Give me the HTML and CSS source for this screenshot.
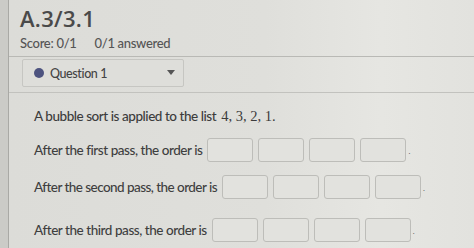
FILE: index.html
```html
<!DOCTYPE html>
<html>
<head>
<meta charset="utf-8">
<link rel="stylesheet" href="styles.css">
</head>
<body>
<div class="page">
  <div class="side"></div>
  <div class="main">
    <div class="header">
      <h1 class="title">A.3/3.1</h1>
      <div class="score"><span>Score: 0/1</span><span class="answered">0/1 answered</span></div>
    </div>
    <div class="qbar">
      <div class="qselect">
        <span class="dot"></span>
        <span class="qlabel">Question 1</span>
        <svg class="caret" width="8" height="6" viewBox="0 0 8 6"><path d="M0 0 L8 0 L4 5 Z" fill="#555"/></svg>
      </div>
    </div>
    <div class="question">
      <p class="prompt">A bubble sort is applied to the list <span class="math">4, 3, 2, 1.</span></p>
      <div class="row r1">
        <span class="label">After the first pass, the order is</span>
        <span class="boxes"><span class="box"></span><span class="box"></span><span class="box"></span><span class="box"></span></span><span class="dotend">.</span>
      </div>
      <div class="row r2">
        <span class="label">After the second pass, the order is</span>
        <span class="boxes"><span class="box"></span><span class="box"></span><span class="box"></span><span class="box"></span></span><span class="dotend">.</span>
      </div>
      <div class="row r3">
        <span class="label">After the third pass, the order is</span>
        <span class="boxes"><span class="box"></span><span class="box"></span><span class="box"></span><span class="box"></span></span><span class="dotend">.</span>
      </div>
    </div>
  </div>
</div>
</body>
</html>
```
FILE: styles.css
```css
html, body {
  margin: 0;
  padding: 0;
  width: 474px;
  height: 248px;
  overflow: hidden;
}
body {
  font-family: Lato, "Open Sans", sans-serif;
  color: #404040;
  background: #d9d9d5;
}
.page {
  display: flex;
  height: 248px;
}
.side {
  width: 8px;
  flex: none;
  background: #cbcbc7;
  border-right: 1px solid #a9a9a5;
}
.main {
  flex: 1;
  background: linear-gradient(90deg, #dcdcd8 0%, #dfdfdb 55%, #e6e6e2 80%, #e2e2de 100%);
}
.header {
  padding: 5px 0 0 11px;
  height: 51px;
  border-bottom: 1px solid #b9b9b5;
}
.title {
  margin: 0;
  font-size: 22px;
  line-height: 26px;
  font-weight: 600;
  color: #4a4a4a;
  letter-spacing: 0.3px;
  font-family: "Open Sans", sans-serif;
}
.score {
  font-size: 13px;
  letter-spacing: -0.3px;
  line-height: 18px;
  margin-top: 3px;
  color: #555;
  font-weight: 500;
}
.answered {
  margin-left: 18px;
}
.qbar {
  height: 36px;
  padding: 2px 0 0 13px;
  box-sizing: border-box;
  border-bottom: 1px solid #c2c2be;
}
.qselect {
  width: 162px;
  height: 28px;
  box-sizing: border-box;
  border: 1px solid #c6c6c2;
  border-radius: 2px;
  background: #dededa;
  display: flex;
  align-items: center;
  padding-left: 11px;
}
.dot {
  width: 10px;
  height: 10px;
  border-radius: 50%;
  background: #4d537f;
  flex: none;
}
.qlabel {
  font-size: 12.5px;
  letter-spacing: -0.4px;
  margin-left: 6px;
  color: #444;
  font-weight: 500;
}
.caret {
  margin-left: auto;
  margin-right: 8px;
}
.question {
  padding: 13px 0 0 25px;
}
.prompt {
  margin: 0;
  font-size: 13.5px;
  letter-spacing: -0.45px;
  line-height: 20px;
  color: #3c3c3c;
  font-weight: 500;
}
.math {
  font-family: "Liberation Serif", serif;
  font-size: 14.5px;
  letter-spacing: 0;
  margin-left: 2px;
  font-weight: 400;
}
.row {
  display: flex;
  align-items: center;
  font-size: 13.5px;
  letter-spacing: -0.45px;
  color: #3f3f3f;
  font-weight: 500;
}
.r1 { margin-top: 12px; }
.r2 { margin-top: 13px; }
.r3 { margin-top: 19px; }
.label {
  margin-right: 5px;
}
.r2 .label {
  letter-spacing: -0.55px;
}
.boxes {
  display: flex;
  gap: 5px;
}
.box {
  width: 46px;
  height: 24px;
  box-sizing: border-box;
  border: 1.5px solid #bdbdb9;
  border-radius: 3px;
  background: #e2e2de;
}
.dotend {
  font-size: 8px;
  margin-left: 2px;
  align-self: flex-end;
  margin-bottom: 6px;
  color: #666;
}
```
